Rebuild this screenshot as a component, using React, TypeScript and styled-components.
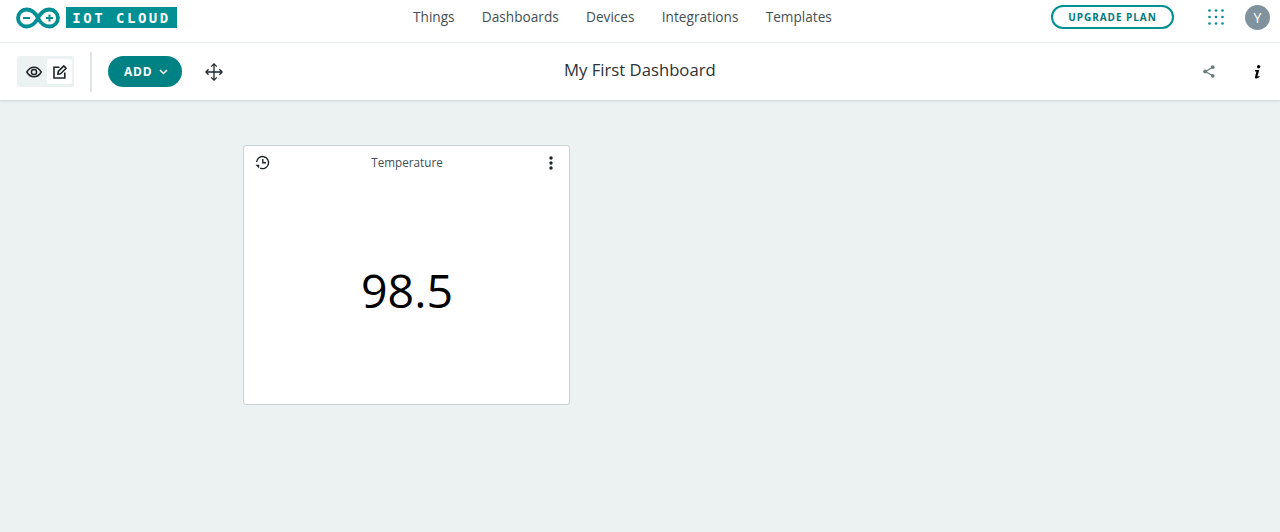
import React from "react";
import styled, { createGlobalStyle } from "styled-components";

const Global = createGlobalStyle`
  html, body { margin: 0; padding: 0; height: 100%; background: #ecf1f1; }
  body { font-family: "Open Sans", "Liberation Sans", sans-serif; overflow: hidden; }
  #root { height: 532px; }
`;

const Page = styled.div`
  display: flex;
  flex-direction: column;
  width: 1280px;
  height: 532px;
  background: #ecf1f1;
`;

const TopBar = styled.header`
  display: grid;
  grid-template-columns: 413px auto 1fr;
  align-items: center;
  height: 42px;
  background: #fff;
  border-bottom: 1px solid #e8ecec;
  box-sizing: content-box;
`;

const Brand = styled.div`
  display: flex;
  align-items: center;
  gap: 6px;
  padding: 0 0 8px 16px;
  height: 26px;
  margin-top: 1px;
`;

const BrandTag = styled.span`
  display: flex;
  align-items: center;
  justify-content: center;
  width: 111px;
  height: 21px;
  background: #008f93;
  color: #fff;
  font-family: "DejaVu Sans Mono", "Liberation Mono", monospace;
  font-weight: 700;
  font-size: 14px;
  letter-spacing: 2.5px;
  white-space: pre;
`;

const Nav = styled.nav`
  display: flex;
  gap: 27.25px;
  padding-bottom: 8px;
`;

const NavLink = styled.a`
  font-size: 13.65px;
  color: #434f54;
  line-height: 20px;
`;

const TopRight = styled.div`
  display: flex;
  align-items: center;
  justify-content: flex-end;
  padding: 0 10px 8px 0;
`;

const Upgrade = styled.button`
  display: flex;
  align-items: center;
  justify-content: center;
  width: 123px;
  height: 24px;
  margin-right: 34px;
  padding: 0;
  box-sizing: border-box;
  background: #fff;
  border: 2px solid #008f93;
  border-radius: 12px;
  color: #00797d;
  font: 700 10px "Open Sans", sans-serif;
  letter-spacing: 0.95px;
`;

const Avatar = styled.span`
  display: flex;
  align-items: center;
  justify-content: center;
  width: 25px;
  height: 25px;
  margin-left: 21px;
  border-radius: 50%;
  background: #7f929e;
  color: #fff;
  font-size: 14px;
`;

const Toolbar = styled.div`
  position: relative;
  display: flex;
  align-items: center;
  height: 57px;
  padding: 0 19px 0 17px;
  background: #fff;
  box-shadow: 0 1px 2px rgba(60, 80, 80, 0.18);
`;

const ViewSwitch = styled.div`
  display: flex;
  align-items: center;
  justify-content: space-between;
  box-sizing: border-box;
  width: 57px;
  height: 31px;
  padding: 3px 2px 3px 4px;
  background: #ecf1f1;
  border-radius: 2px;
`;

const SwitchItem = styled.span<{ $active?: boolean }>`
  display: flex;
  align-items: center;
  justify-content: center;
  width: 25px;
  height: 25px;
  background: ${(p) => (p.$active ? "#fff" : "transparent")};
  border-radius: 2px;
`;

const Divider = styled.span`
  width: 2px;
  height: 40px;
  margin: 0 16px 0 16px;
  background: #dfe5e5;
`;

const AddButton = styled.button`
  display: flex;
  align-items: center;
  gap: 7px;
  box-sizing: border-box;
  width: 73.5px;
  height: 31px;
  padding: 0 0 0 16px;
  border: none;
  border-radius: 16px;
  background: #008184;
  color: #fff;
  font: 700 12px "Open Sans", sans-serif;
  letter-spacing: 0.8px;
`;

const MoveHandle = styled.span`
  display: flex;
  margin-left: 23px;
`;

const Title = styled.h1`
  flex: 1;
  margin: 0 0 3px;
  padding-left: 341.5px;
  font-size: 16.7px;
  font-weight: 400;
  color: #2b3336;
  line-height: 24px;
`;

const ToolActions = styled.div`
  display: flex;
  align-items: center;
  gap: 39px;
`;

const Canvas = styled.main`
  flex: 1;
  padding: 45px 0 0 243px;
`;

const Card = styled.section`
  display: flex;
  flex-direction: column;
  box-sizing: border-box;
  width: 327px;
  height: 260px;
  background: #fff;
  border: 1px solid #c9d2d2;
  border-radius: 3px;
`;

const CardHeader = styled.div`
  display: flex;
  align-items: center;
  justify-content: space-between;
  height: 33px;
  padding: 0 16px 0 11px;
`;

const CardTitle = styled.span`
  margin: 0 5px 1px 0;
  font-size: 11.7px;
  color: #434f54;
`;

const CardValue = styled.div`
  flex: 1;
  display: flex;
  align-items: center;
  justify-content: center;
  padding: 0 0 3px 1px;
  font-size: 46.5px;
  color: #000;
`;

const Logo = () => (
  <svg width="44" height="22" viewBox="0 0 44 22" fill="none">
    <path
      d="M22 11 C19.5 6 16 2.5 10.5 2.5 A8.5 8.5 0 0 0 10.5 19.5 C16 19.5 19.5 16 22 11 C24.5 6 28 2.5 33.5 2.5 A8.5 8.5 0 0 1 33.5 19.5 C28 19.5 24.5 16 22 11 Z"
      stroke="#008f93"
      strokeWidth="3.8"
    />
    <path d="M7 11 H14" stroke="#008f93" strokeWidth="2" />
    <path d="M30 11 H37 M33.5 7.5 V14.5" stroke="#008f93" strokeWidth="2" />
  </svg>
);

const Apps = () => (
  <svg width="16" height="16" viewBox="0 0 16 16" fill="#008f93">
    {[1.5, 8, 14.5].flatMap((y) =>
      [1.5, 8, 14.5].map((x) => <circle key={`${x}-${y}`} cx={x} cy={y} r="1.3" />)
    )}
  </svg>
);

const Eye = () => (
  <svg width="16" height="12" viewBox="0 0 16 12" fill="none" stroke="#1d2528" strokeWidth="1.5">
    <path d="M.8 6 C2.8 2.6 5.2 1.2 8 1.2 C10.8 1.2 13.2 2.6 15.2 6 C13.2 9.4 10.8 10.8 8 10.8 C5.2 10.8 2.8 9.4 .8 6 Z" />
    <circle cx="8" cy="6" r="2.6" />
  </svg>
);

const Edit = () => (
  <svg width="14" height="14" viewBox="0 0 14 14" fill="none" stroke="#1d2528" strokeWidth="1.6">
    <path d="M6.5 2.2 H1 V13 H11.8 V7.5" />
    <path d="M4.8 9.2 L5.3 6.4 L10.8 .9 L13.1 3.2 L7.6 8.7 Z" strokeLinejoin="round" />
  </svg>
);

const Chevron = () => (
  <svg width="9" height="6" viewBox="0 0 9 6" fill="none" stroke="#fff" strokeWidth="1.5">
    <path d="M1 1 L4.5 4.5 L8 1" />
  </svg>
);

const Move = () => (
  <svg width="18" height="18" viewBox="0 0 18 18" fill="none" stroke="#1d2528" strokeWidth="1.3">
    <path d="M9 1 V17 M1 9 H17" />
    <path d="M6.2 3.6 L9 .9 L11.8 3.6 M6.2 14.4 L9 17.1 L11.8 14.4 M3.6 6.2 L.9 9 L3.6 11.8 M14.4 6.2 L17.1 9 L14.4 11.8" />
  </svg>
);

const Share = () => (
  <svg width="12" height="13" viewBox="0 0 12 13" fill="#6f7a7d" stroke="#6f7a7d">
    <path d="M9.7 2.2 L2.4 6.5 L9.7 10.8" fill="none" strokeWidth="1.3" />
    <circle cx="9.7" cy="2.2" r="1.9" strokeWidth="0" />
    <circle cx="2.2" cy="6.5" r="2" strokeWidth="0" />
    <circle cx="9.7" cy="10.8" r="1.9" strokeWidth="0" />
  </svg>
);

const Info = () => (
  <svg width="7" height="14" viewBox="0 0 7 14" fill="#000">
    <circle cx="4.6" cy="1.8" r="1.7" />
    <path d="M1.2 5 H5.2 L3.6 11 Q3.5 11.8 4.2 11.6 L5.4 10.8 L5.8 11.5 Q4.2 13.6 2.2 13.6 Q.7 13.6 1 12 L2.4 6.6 H.9 Z" />
  </svg>
);

const History = () => (
  <svg width="15" height="15" viewBox="0 0 15 15" fill="none" stroke="#1d2528" strokeWidth="1.4">
    <path d="M1.6 7 A6 6 0 1 1 5.2 13.1" />
    <path d="M7.8 4 V7.8 H11" />
    <path d="M.5 9.8 H4.2 V13.5 Z" fill="#1d2528" strokeWidth="0" />
  </svg>
);

const Kebab = () => (
  <svg width="4" height="14" viewBox="0 0 4 14" fill="#1d2528">
    <circle cx="2" cy="2" r="1.7" />
    <circle cx="2" cy="7" r="1.7" />
    <circle cx="2" cy="12" r="1.7" />
  </svg>
);

const links = ["Things", "Dashboards", "Devices", "Integrations", "Templates"];

export default function App() {
  return (
    <Page>
      <Global />
      <TopBar>
        <Brand>
          <Logo />
          <BrandTag>IOT CLOUD</BrandTag>
        </Brand>
        <Nav>
          {links.map((l) => (
            <NavLink key={l}>{l}</NavLink>
          ))}
        </Nav>
        <TopRight>
          <Upgrade>UPGRADE PLAN</Upgrade>
          <Apps />
          <Avatar>Y</Avatar>
        </TopRight>
      </TopBar>
      <Toolbar>
        <ViewSwitch>
          <SwitchItem>
            <Eye />
          </SwitchItem>
          <SwitchItem $active>
            <Edit />
          </SwitchItem>
        </ViewSwitch>
        <Divider />
        <AddButton>
          ADD
          <Chevron />
        </AddButton>
        <MoveHandle>
          <Move />
        </MoveHandle>
        <Title>My First Dashboard</Title>
        <ToolActions>
          <Share />
          <Info />
        </ToolActions>
      </Toolbar>
      <Canvas>
        <Card>
          <CardHeader>
            <History />
            <CardTitle>Temperature</CardTitle>
            <Kebab />
          </CardHeader>
          <CardValue>98.5</CardValue>
        </Card>
      </Canvas>
    </Page>
  );
}
